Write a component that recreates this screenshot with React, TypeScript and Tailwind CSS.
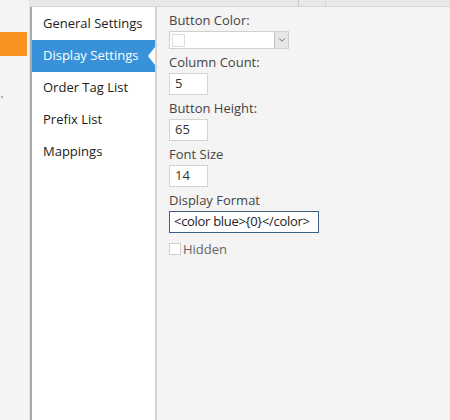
import { ChevronDown } from "lucide-react";

const menu = ["General Settings", "Display Settings", "Order Tag List", "Prefix List", "Mappings"];

function Label({ children }: { children: string }) {
  return <span className="h-[24px] pt-[4px] leading-[18px] text-[#444]">{children}</span>;
}

function Field({ label, value }: { label: string; value: string }) {
  return (
    <div className="flex flex-col">
      <Label>{label}</Label>
      <div className="flex h-[22px] w-[39px] items-center border border-[#d4d4d4] bg-white px-[5px] text-[#333]">
        {value}
      </div>
    </div>
  );
}

export default function App() {
  return (
    <div
      className="flex h-[420px] w-[450px] overflow-hidden bg-[#f4f4f4] text-[13px]"
      style={{ fontFamily: '"Open Sans", "Noto Sans", sans-serif' }}
    >
      {/* left strip */}
      <div className="flex w-[30px] flex-col border-r border-[#e2e2e2]">
        <div className="mr-[2px] mt-[32px] h-[24px] bg-[#f7931e]" />
        <div className="ml-[1px] mt-[40px] h-[2px] w-[2px] bg-[#9bb]" />
      </div>

      <div className="flex flex-1 flex-col">
        <div className="flex h-[7px] border-b border-[#d6d6d6] bg-[#e8e8e8]">
          <div className="w-[269px] border-r border-[#c8c8c8]" />
          <div className="w-[27px] border-r border-[#d8d8d8]" />
        </div>
        <div className="flex flex-1">
          {/* sidebar */}
          <div className="w-[127px] border-l-2 border-r-2 border-l-[#a9a9a9] border-r-[#d4d4d4] bg-white pt-[1px]">
            {menu.map((item) =>
              item === "Display Settings" ? (
                <div key={item} className="relative flex h-[32px] items-center bg-[#3892da] pl-[11px] text-white">
                  {item}
                  <div className="absolute right-0 top-[7px] h-0 w-0 border-y-[9px] border-r-[7px] border-y-transparent border-r-white" />
                </div>
              ) : (
                <div key={item} className="flex h-[32px] items-center pl-[11px] text-[#222]">
                  {item}
                </div>
              ),
            )}
          </div>

          {/* content */}
          <div className="flex flex-1 flex-col pl-[12px]">
            <Label>Button Color:</Label>
            <div className="flex h-[18px] w-[120px] items-center border border-[#cfcfcf] bg-white">
              <div className="ml-[2px] h-[13px] w-[13px] border border-[#dcdcdc] bg-white" />
              <div className="ml-auto flex h-[16px] w-[14px] items-center justify-center border-l border-[#c0c0c0] bg-[#e6e6e6]">
                <ChevronDown size={10} strokeWidth={2} className="text-[#555]" />
              </div>
            </div>
            <Field label="Column Count:" value="5" />
            <Field label="Button Height:" value="65" />
            <Field label="Font Size" value="14" />
            <div className="flex flex-col">
              <Label>Display Format</Label>
              <div className="flex h-[22px] w-[150px] items-center overflow-hidden whitespace-nowrap border border-[#3d5f85] bg-white px-[4px] text-[13px] tracking-[-0.3px] text-[#222]">
                {"<color blue>{0}</color>"}
              </div>
            </div>
            <div className="mt-[8px] flex items-center gap-[2px]">
              <div className="h-[12px] w-[12px] border border-[#cfcfcf] bg-white" />
              <span className="leading-[16px] text-[#666]">Hidden</span>
            </div>
          </div>
        </div>
      </div>
    </div>
  );
}
